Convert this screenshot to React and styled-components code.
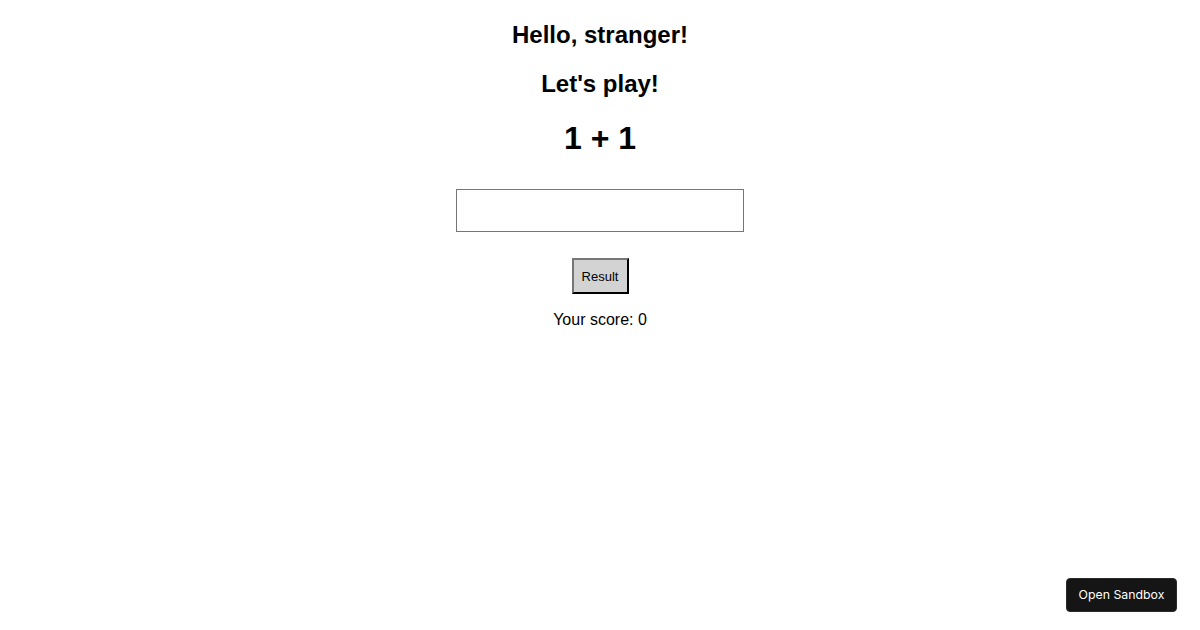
import React, { useState } from "react";
import styled, { createGlobalStyle } from "styled-components";

const GlobalStyle = createGlobalStyle`
  html, body {
    margin: 0;
    padding: 0;
    background: #ffffff;
  }
  body {
    font-family: "Liberation Sans", Arial, sans-serif;
    color: #000000;
  }
`;

const Page = styled.main`
  display: flex;
  flex-direction: column;
  align-items: center;
  padding-top: 21px;
  text-align: center;
`;

const Title = styled.h2`
  margin: 0 0 ${(p) => p.$after}px;
  font-size: 24px;
  line-height: 28px;
  font-weight: bold;
`;

const Question = styled.h1`
  margin: 0 0 32px;
  font-size: 32px;
  line-height: 37px;
  font-weight: bold;
`;

const AnswerInput = styled.input`
  box-sizing: border-box;
  width: 288px;
  height: 43px;
  margin: 0 0 26px;
  padding: 0 10px;
  border: 1px solid #767676;
  border-radius: 0;
  font-family: "Liberation Sans", Arial, sans-serif;
  font-size: 16px;
  outline: none;
`;

const ResultButton = styled.button`
  box-sizing: border-box;
  width: 57px;
  height: 36px;
  margin: 0 0 17px;
  padding: 0;
  background: #d3d3d3;
  border: 2px outset #767676;
  border-right-color: #1a1a1a;
  border-bottom-color: #1a1a1a;
  font-family: "Liberation Sans", Arial, sans-serif;
  font-size: 13px;
  color: #000000;
  cursor: pointer;
`;

const Score = styled.p`
  margin: 0;
  font-size: 16px;
  line-height: 18px;
`;

const SandboxButton = styled.button`
  position: fixed;
  right: 23px;
  bottom: 18px;
  box-sizing: border-box;
  width: 111px;
  height: 34px;
  padding: 0 0 1px;
  background: #151515;
  color: #ffffff;
  border: 1px solid #2a2a2a;
  border-radius: 4px;
  font-family: Inter, "Noto Sans", sans-serif;
  font-size: 12.3px;
  cursor: pointer;
`;

export default function App() {
  const [answer, setAnswer] = useState("");
  const [score, setScore] = useState(0);

  const check = () => {
    if (Number(answer) === 2) setScore(score + 1);
    setAnswer("");
  };

  return (
    <>
      <GlobalStyle />
      <Page>
        <Title $after={21}>Hello, stranger!</Title>
        <Title $after={22}>Let's play!</Title>
        <Question>1 + 1</Question>
        <AnswerInput
          value={answer}
          onChange={(e) => setAnswer(e.target.value)}
        />
        <ResultButton onClick={check}>Result</ResultButton>
        <Score>Your score: {score}</Score>
      </Page>
      <SandboxButton>Open Sandbox</SandboxButton>
    </>
  );
}
